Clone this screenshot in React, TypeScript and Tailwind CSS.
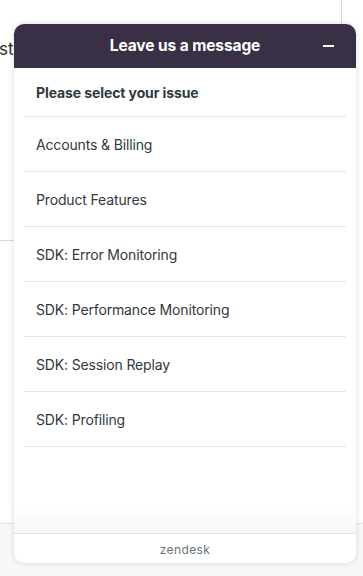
import React from "react";

const items = [
  "Accounts & Billing",
  "Product Features",
  "SDK: Error Monitoring",
  "SDK: Performance Monitoring",
  "SDK: Session Replay",
  "SDK: Profiling",
];

export default function App() {
  return (
    <div
      className="relative w-[363px] h-[576px] overflow-hidden bg-[#f8f8fa]"
      style={{ fontFamily: "Inter, 'Noto Sans', sans-serif" }}
    >
      <div className="h-[524px] bg-white border-b border-[#e2e2e8]">
        <div className="w-[342px] h-[241px] border-r border-b border-[#d9d6e3] pt-[37px]">
          <span className="block text-[17px] leading-[24px] text-[#2b2b2b] -ml-[1px]">st</span>
        </div>
      </div>

      <div className="absolute left-[14px] top-[24px] w-[342px] h-[539px] bg-white rounded-[10px] shadow-[0_0_6px_rgba(0,0,0,0.14)] flex flex-col overflow-hidden">
        <div className="h-[44px] shrink-0 bg-[#3a3046] flex items-center justify-center relative">
          <span className="text-white font-bold text-[15.5px] tracking-[-0.1px]">Leave us a message</span>
          <div className="absolute right-[22px] top-[21px] w-[11px] h-[2px] bg-white" />
        </div>
        <div className="flex-1 flex flex-col relative">
          <div className="px-[10px]">
            <div className="h-[49px] border-b border-[#e6e6e9] flex items-center pl-[12px]">
              <span className="text-[14px] font-bold text-[#2f3941] tracking-[-0.1px]">Please select your issue</span>
            </div>
            {items.map((t) => (
              <div key={t} className="h-[55px] border-b border-[#e6e6e9] flex items-center pl-[12px]">
                <span className="text-[14px] text-[#2f3941] tracking-[-0.15px]">{t}</span>
              </div>
            ))}
          </div>
          <div className="absolute left-0 right-0 bottom-0 h-[26px] bg-gradient-to-b from-white to-[#f6f6f7]" />
        </div>
        <div className="h-[30px] shrink-0 border-t border-[#e4e4e6] flex items-center justify-center">
          <span className="text-[12px] text-[#68737d] tracking-[0.4px] pt-[2px]">zendesk</span>
        </div>
      </div>
    </div>
  );
}
